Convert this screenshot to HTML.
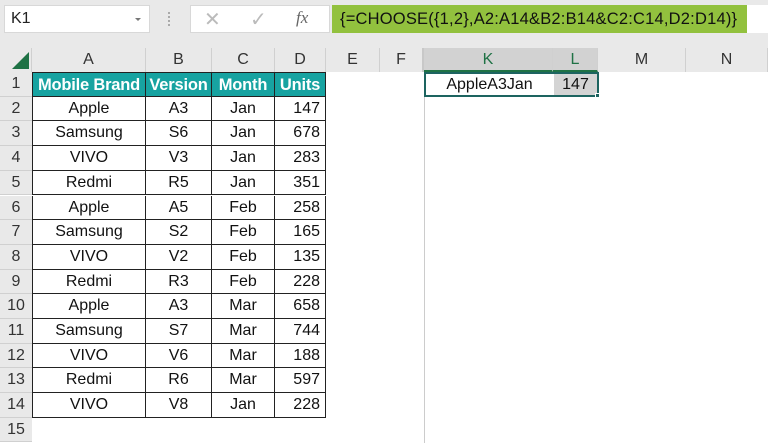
<!DOCTYPE html>
<html><head><style>
*{margin:0;padding:0;box-sizing:border-box}
body{width:768px;height:443px;overflow:hidden;background:#fff;font-family:"Liberation Sans",sans-serif;position:relative}
.a{position:absolute}
.bar{left:0;top:0;width:768px;height:48px;background:#e9e9e9}
.colh{top:48px;height:24px;background:#e9e9e9;border-right:1px solid #d0d0d0;text-align:center;font-size:16px;line-height:24px;color:#333}
.rowh{left:0;width:32px;height:24.7px;background:#e9e9e9;border-bottom:1px solid #d0d0d0;font-size:16px;color:#333;text-align:center}
.c{height:24.7px;font-size:16px;line-height:24px;border-right:1px solid #222;border-bottom:1px solid #222;text-align:center;color:#111;white-space:nowrap}
.h{background:#17a3a1;color:#fff;font-weight:bold;font-size:16.5px;letter-spacing:-0.2px}
</style></head><body>
<div class="a bar"></div>
<div class="a" style="left:4px;top:5px;width:146px;height:28px;background:#fff;border:1px solid #d8d8d8;font-size:16px;line-height:26px;padding-left:6px;color:#222">K1</div>
<div class="a" style="left:135px;top:18px;width:0;height:0;border-left:3px solid transparent;border-right:3px solid transparent;border-top:3px solid #777"></div>
<div class="a" style="left:168px;top:12px;width:2px;height:14px;border-left:2px dotted #aaa"></div>
<div class="a" style="left:190px;top:5px;width:140px;height:28px;background:#fff;border:1px solid #d8d8d8"></div>
<div class="a" style="left:204px;top:7px;font-size:20px;color:#bbb">✕</div>
<div class="a" style="left:250px;top:7px;font-size:20px;color:#bbb">✓</div>
<div class="a" style="left:296px;top:8px;font-size:17px;font-style:italic;font-family:'Liberation Serif',serif;color:#666">fx</div>
<div class="a" style="left:332px;top:5px;width:415px;height:28px;background:#92c13e;font-size:16.5px;line-height:28px;padding-left:8px;color:#111;white-space:nowrap;letter-spacing:0.2px">{=CHOOSE({1,2},A2:A14&amp;B2:B14&amp;C2:C14,D2:D14)}</div>
<div class="a" style="left:747px;top:5px;width:21px;height:28px;background:#fff"></div>
<div class="a" style="left:0;top:48px;width:32px;height:24px;background:#e9e9e9;border-right:1px solid #d0d0d0"></div>
<div class="a" style="left:12px;top:52px;width:0;height:0;border-left:17px solid transparent;border-bottom:17px solid #1f7245"></div>
<div class="a colh" style="left:32px;width:114px">A</div>
<div class="a colh" style="left:146px;width:66px">B</div>
<div class="a colh" style="left:212px;width:63px">C</div>
<div class="a colh" style="left:275px;width:51px">D</div>
<div class="a colh" style="left:326px;width:54px">E</div>
<div class="a colh" style="left:380px;width:44px;border-right:2px solid #c8c8c8">F</div>
<div class="a colh" style="left:424px;width:129px;background:#d2d2d2;color:#1f7245;border-bottom:2px solid #1f7245">K</div>
<div class="a colh" style="left:553px;width:45px;background:#d2d2d2;color:#1f7245;border-bottom:2px solid #1f7245">L</div>
<div class="a colh" style="left:598px;width:88px">M</div>
<div class="a colh" style="left:686px;width:82px">N</div>
<div class="a" style="left:424px;top:72px;width:1px;height:371px;background:#ccc"></div>
<div id="g"></div>
<div class="a" style="left:424px;top:72px;width:175px;height:25px;border:2px solid #1d6460"></div>
<div class="a" style="left:554px;top:74px;width:43px;height:21px;background:#d4d4d4"></div>
<div class="a" style="left:426px;top:72px;width:127px;height:25px;font-size:16px;line-height:25px;text-align:center;color:#111">AppleA3Jan</div>
<div class="a" style="left:553px;top:72px;width:45px;height:25px;font-size:16px;line-height:25px;text-align:center;color:#111">147</div>
<div class="a" style="left:595px;top:93px;width:5px;height:5px;background:#1d6460;border:1px solid #fff"></div>
<script>
var d=[["Mobile Brand","Version","Month","Units"],["Apple","A3","Jan","147"],["Samsung","S6","Jan","678"],["VIVO","V3","Jan","283"],["Redmi","R5","Jan","351"],["Apple","A5","Feb","258"],["Samsung","S2","Feb","165"],["VIVO","V2","Feb","135"],["Redmi","R3","Feb","228"],["Apple","A3","Mar","658"],["Samsung","S7","Mar","744"],["VIVO","V6","Mar","188"],["Redmi","R6","Mar","597"],["VIVO","V8","Jan","228"]];
var xs=[32,146,212,275,326],h="",rh=24.7;
for(var r=0;r<15;r++){var y=72+r*rh;
h+='<div class="a rowh" style="top:'+y+'px;line-height:'+rh+'px">'+(r+1)+'</div>';
if(r<14)for(var c=0;c<4;c++){var st='left:'+xs[c]+'px;top:'+y+'px;width:'+(xs[c+1]-xs[c])+'px;';
if(c==0)st+='border-left:1px solid #222;';if(r==0)st+='border-top:1px solid #222;';
if(c==3&&r>0)st+='text-align:right;padding-right:5px;';
h+='<div class="a c'+(r==0?' h':'')+'" style="'+st+'">'+d[r][c]+'</div>';}}
document.getElementById('g').innerHTML=h;
</script>
</body></html>
